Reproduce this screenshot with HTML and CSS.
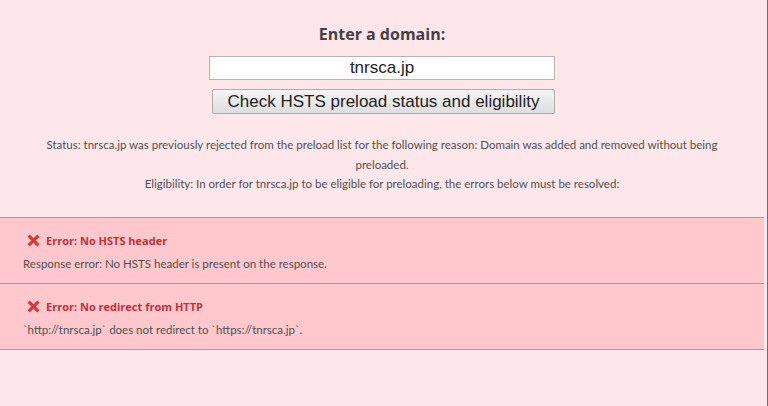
FILE: index.html
```html
<!DOCTYPE html>
<html lang="en">
<head>
    <meta charset="UTF-8">
    <meta name="viewport" content="width=device-width, initial-scale=1.0">
    <title>HSTS Preload List Submission</title>
    <link rel="stylesheet" href="styles.css">
</head>
<body>
    <div class="page">
        <form class="domain-form">
            <h2 class="form-title">Enter a domain:</h2>
            <input class="domain-input" type="text" value="tnrsca.jp">
            <button class="check-button" type="button">Check HSTS preload status and eligibility</button>
        </form>

        <div class="summary">
            <div class="status">Status: tnrsca.jp was previously rejected from the preload list for the following reason: Domain was added and removed without being preloaded.</div>
            <div class="eligibility">Eligibility: In order for tnrsca.jp to be eligible for preloading, the errors below must be resolved:</div>
        </div>

        <div class="issues">
            <div class="issue">
                <div class="issue-title">
                    <svg class="issue-icon" viewBox="0 0 12 12"><path d="M1.5 1.5 L10.5 10.5 M10.5 1.5 L1.5 10.5"/></svg>
                    Error: No HSTS header
                </div>
                <div class="issue-message">Response error: No HSTS header is present on the response.</div>
            </div>
            <div class="issue">
                <div class="issue-title">
                    <svg class="issue-icon" viewBox="0 0 12 12"><path d="M1.5 1.5 L10.5 10.5 M10.5 1.5 L1.5 10.5"/></svg>
                    Error: No redirect from HTTP
                </div>
                <div class="issue-message">`http://tnrsca.jp` does not redirect to `https://tnrsca.jp`.</div>
            </div>
        </div>
    </div>
</body>
</html>
```

FILE: styles.css
```css
html, body {
    height: 100%;
}

body {
    margin: 0;
    background-color: #fde7ea;
    font-family: Lato, "Open Sans", sans-serif;
    color: #555;
    border-right: 1px solid #9c5a63;
    box-sizing: border-box;
}

.page {
    padding-top: 23px;
    margin-right: 3px;
}

.domain-form {
    display: flex;
    flex-direction: column;
    align-items: center;
    margin: 0;
}

.form-title {
    margin: 0 0 11px 0;
    font-size: 16px;
    line-height: 22px;
    font-weight: bold;
    color: #454045;
    font-family: "Open Sans", sans-serif;
}

.domain-input {
    width: 346px;
    height: 24px;
    box-sizing: border-box;
    margin: 0 0 9px 0;
    padding: 0 4px;
    border: 1px solid #b9b2b4;
    background: #fff;
    font-family: "Liberation Sans", Arial, sans-serif;
    font-size: 17px;
    text-align: center;
    color: #222;
}

.check-button {
    width: 343px;
    height: 25px;
    margin-left: 3px;
    padding: 0;
    border: 1px solid #adadad;
    border-radius: 2px;
    background: linear-gradient(#f5f5f5, #dedede);
    font-family: "Liberation Sans", Arial, sans-serif;
    font-size: 17px;
    color: #222;
}

.summary {
    max-width: 690px;
    margin: 0 auto;
    padding: 21px 0 23px 0;
    text-align: center;
    font-size: 11.5px;
    line-height: 19.5px;
    color: #505050;
}

.issues {
    border-top: 1px solid #a89a9c;
}

.issue {
    background-color: #ffc8cd;
    border-bottom: 1px solid #a89a9c;
    padding: 14px 23px 10px 23px;
}

.issue-title {
    display: flex;
    align-items: center;
    gap: 6px;
    padding-left: 4px;
    margin-bottom: 5px;
    font-family: "Open Sans", sans-serif;
    font-size: 11px;
    line-height: 18px;
    font-weight: bold;
    color: #c42e3a;
}

.issue-icon {
    width: 13px;
    height: 13px;
    fill: none;
    stroke: #d9363e;
    stroke-width: 3;
}

.issue-message {
    font-size: 11.5px;
    line-height: 18px;
    color: #505050;
}
```
